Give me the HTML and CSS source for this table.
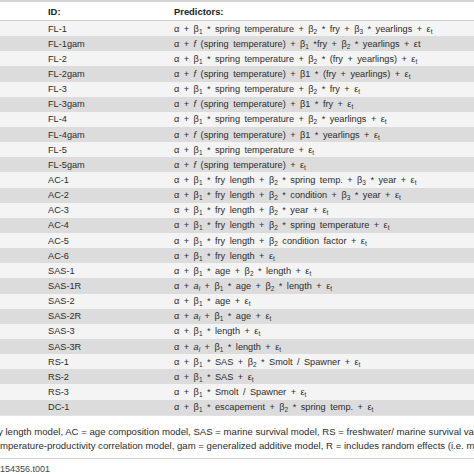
FILE: index.html
```html
<!DOCTYPE html>
<html>
<head>
<meta charset="utf-8">
<link rel="stylesheet" href="styles.css">
</head>
<body>
<div class="page">
  <div class="table">
    <div class="row head"><span class="id">ID:</span><span class="pred">Predictors:</span></div>
    <div class="row odd"><span class="id">FL-1</span><span class="pred">α + β<sub>1</sub> * spring temperature + β<sub>2</sub> * fry + β<sub>3</sub> * yearlings + ε<sub>t</sub></span></div>
    <div class="row even"><span class="id">FL-1gam</span><span class="pred">α + <i>f</i> (spring temperature) + β<sub>1</sub> *fry + β<sub>2</sub> * yearlings + εt</span></div>
    <div class="row odd"><span class="id">FL-2</span><span class="pred">α + β<sub>1</sub> * spring temperature + β<sub>2</sub> * (fry + yearlings) + ε<sub>t</sub></span></div>
    <div class="row even"><span class="id">FL-2gam</span><span class="pred">α + <i>f</i> (spring temperature) + β1 * (fry + yearlings) + ε<sub>t</sub></span></div>
    <div class="row odd"><span class="id">FL-3</span><span class="pred">α + β<sub>1</sub> * spring temperature + β<sub>2</sub> * fry + ε<sub>t</sub></span></div>
    <div class="row even"><span class="id">FL-3gam</span><span class="pred">α + <i>f</i> (spring temperature) + β1 * fry + ε<sub>t</sub></span></div>
    <div class="row odd"><span class="id">FL-4</span><span class="pred">α + β<sub>1</sub> * spring temperature + β<sub>2</sub> * yearlings + ε<sub>t</sub></span></div>
    <div class="row even"><span class="id">FL-4gam</span><span class="pred">α + <i>f</i> (spring temperature) + β1 * yearlings + ε<sub>t</sub></span></div>
    <div class="row odd"><span class="id">FL-5</span><span class="pred">α + β<sub>1</sub> * spring temperature + ε<sub>t</sub></span></div>
    <div class="row even"><span class="id">FL-5gam</span><span class="pred">α + <i>f</i> (spring temperature) + ε<sub>t</sub></span></div>
    <div class="row odd"><span class="id">AC-1</span><span class="pred">α + β<sub>1</sub> * fry length + β<sub>2</sub> * spring temp. + β<sub>3</sub> * year + ε<sub>t</sub></span></div>
    <div class="row even"><span class="id">AC-2</span><span class="pred">α + β<sub>1</sub> * fry length + β<sub>2</sub> * condition + β<sub>3</sub> * year + ε<sub>t</sub></span></div>
    <div class="row odd"><span class="id">AC-3</span><span class="pred">α + β<sub>1</sub> * fry length + β<sub>2</sub> * year + ε<sub>t</sub></span></div>
    <div class="row even"><span class="id">AC-4</span><span class="pred">α + β<sub>1</sub> * fry length + β<sub>2</sub> * spring temperature + ε<sub>t</sub></span></div>
    <div class="row odd"><span class="id">AC-5</span><span class="pred">α + β<sub>1</sub> * fry length + β<sub>2</sub> condition factor + ε<sub>t</sub></span></div>
    <div class="row even"><span class="id">AC-6</span><span class="pred">α + β<sub>1</sub> * fry length + ε<sub>t</sub></span></div>
    <div class="row odd"><span class="id">SAS-1</span><span class="pred">α + β<sub>1</sub> * age + β<sub>2</sub> * length + ε<sub>t</sub></span></div>
    <div class="row even"><span class="id">SAS-1R</span><span class="pred">α + <i>a<sub>i</sub></i> + β<sub>1</sub> * age + β<sub>2</sub> * length + ε<sub>t</sub></span></div>
    <div class="row odd"><span class="id">SAS-2</span><span class="pred">α + β<sub>1</sub> * age + ε<sub>t</sub></span></div>
    <div class="row even"><span class="id">SAS-2R</span><span class="pred">α + <i>a<sub>i</sub></i> + β<sub>1</sub> * age + ε<sub>t</sub></span></div>
    <div class="row odd"><span class="id">SAS-3</span><span class="pred">α + β<sub>1</sub> * length + ε<sub>t</sub></span></div>
    <div class="row even"><span class="id">SAS-3R</span><span class="pred">α + <i>a<sub>i</sub></i> + β<sub>1</sub> * length + ε<sub>t</sub></span></div>
    <div class="row odd"><span class="id">RS-1</span><span class="pred">α + β<sub>1</sub> * SAS + β<sub>2</sub> * Smolt / Spawner + ε<sub>t</sub></span></div>
    <div class="row even"><span class="id">RS-2</span><span class="pred">α + β<sub>1</sub> * SAS + ε<sub>t</sub></span></div>
    <div class="row odd"><span class="id">RS-3</span><span class="pred">α + β<sub>1</sub> * Smolt / Spawner + ε<sub>t</sub></span></div>
    <div class="row even"><span class="id">DC-1</span><span class="pred">α + β<sub>1</sub> * escapement + β<sub>2</sub> * spring temp. + ε<sub>t</sub></span></div>
  </div>
  <div class="notes">
    <p class="note n1">y length model, AC = age composition model, SAS = marine survival model, RS = freshwater/ marine survival variability model,</p>
    <p class="note n2">mperature-productivity correlation model, gam = generalized additive model, R = includes random effects (i.e. model</p>
  </div>
  <div class="doi">i154356.t001</div>
</div>
</body>
</html>
```
FILE: styles.css
```css
html, body {
  margin: 0;
  padding: 0;
  background: #ffffff;
}
.page {
  width: 474px;
  height: 474px;
  overflow: hidden;
  font-family: "Liberation Sans", Arial, sans-serif;
  font-size: 9.2px;
  color: #2c2c2c;
}
.table {
  border-top: 2px solid #d4d4d4;
  border-bottom: 1px solid #e2e2e2;
}
.row {
  display: grid;
  grid-template-columns: 174px 1fr;
  align-items: center;
  height: 15.15px;
  white-space: nowrap;
}
.row .id {
  padding-left: 48px;
}
.pred {
  word-spacing: 1.9px;
}
.head {
  height: 18px;
  background: #ffffff;
  font-weight: bold;
  font-size: 9.4px;
  border-bottom: 1px solid #d0d0d0;
  color: #222;
}
.head .pred {
  word-spacing: 0;
}
.odd {
  background: #f4f4f4;
}
.even {
  background: #dcdcdc;
}
sub {
  font-size: 6.5px;
  vertical-align: -2px;
  line-height: 0;
  word-spacing: 0;
}
i {
  font-style: italic;
}
.notes {
  padding-top: 9px;
  height: 33px;
  border-bottom: 1px solid #cfcfcf;
}
.note {
  margin: 0;
  font-size: 9.6px;
  line-height: 14.5px;
  white-space: nowrap;
  overflow: hidden;
}
.n1 {
  text-indent: -2px;
}
.doi {
  padding-top: 5px;
  font-size: 9px;
  color: #444;
  text-indent: -2px;
}
```
